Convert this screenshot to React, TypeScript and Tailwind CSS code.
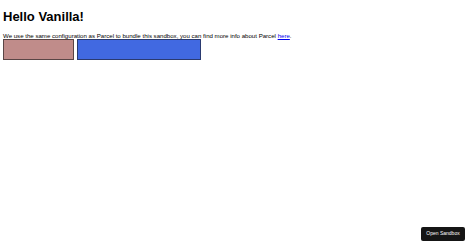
export default function App() {
  return (
    <div className="relative w-[474px] h-[248px] bg-white overflow-hidden" style={{ fontFamily: '"Liberation Sans", Arial, sans-serif' }}>
      <div className="pl-[3px] pt-[9px]">
        <h1 className="text-[13px] font-bold leading-[15px] text-black">Hello Vanilla!</h1>
        <p className="mt-[8px] text-[6.1px] leading-[7px] text-black">
          We use the same configuration as Parcel to bundle this sandbox, you can find more info about Parcel{" "}
          <a href="#" className="text-[#0000ee] underline">here</a>.
        </p>
        <div className="mt-[0px] flex gap-[3px]">
          <div className="w-[71px] h-[21px] bg-[#c08c8a] border border-[#5a4545]" />
          <div className="w-[124px] h-[21px] bg-[#4169e1] border border-[#2a3a70]" />
        </div>
      </div>
      <div className="absolute right-[9px] bottom-[7px] w-[44px] h-[14px] rounded-[2px] bg-[#151515] text-white text-[5px] flex items-center justify-center">
        Open Sandbox
      </div>
    </div>
  );
}
